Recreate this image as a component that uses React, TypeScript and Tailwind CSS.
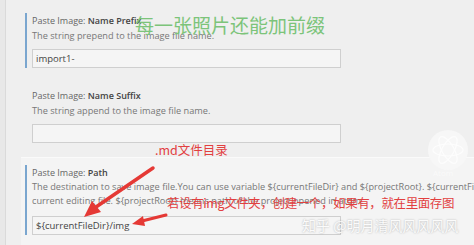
import React from "react";

const Field = ({
    name,
    desc,
    value,
    bar,
    gap = "mt-[6px]",
}: {
    name: string;
    desc: React.ReactNode;
    value?: string;
    bar?: boolean;
    gap?: string;
}) => {
    return (
        <div className="flex">
            <div className={bar ? "w-[2px] shrink-0 bg-[#7aa6cf]" : "w-[2px] shrink-0"} />
            <div className="flex-1 min-w-0 pl-[5px]">
                <div className="h-[15px] leading-[15px] text-[9px] text-[#666] whitespace-nowrap">
                    Paste Image: <span className="font-semibold text-[#444]">{name}</span>
                </div>
                <div className="text-[9.2px] leading-[15px] text-[#777] whitespace-nowrap">
                    {desc}
                </div>
                <div className={`${gap} w-[309px] h-[19px] border border-[#cfcfcf] bg-[#f5f5f5] px-[3px] text-[9.5px] leading-[17px] text-[#444]`}>
                    {value}
                </div>
            </div>
        </div>
    );
};

export default function App() {
    return (
        <div className="relative w-[474px] h-[245px] overflow-hidden flex bg-[#efefef] font-['Open_Sans','Noto_Sans','Noto_Sans_CJK_SC',sans-serif]">
            <div className="w-[6px] shrink-0 bg-[#e8e8e8] border-r border-[#dadada]" />

            <div className="flex-1 min-w-0 flex flex-col">
                <div className="pl-[19px] pt-[13px]">
                    <Field
                        bar
                        name="Name Prefix"
                        desc="The string prepend to the image file name."
                        value="import1-"
                    />
                </div>
                <div className="pl-[19px] pt-[20px]">
                    <Field name="Name Suffix" desc="The string append to the image file name." />
                </div>

                <div className="mt-[14px] ml-[15px] flex-1 bg-[#f4f4f4] border-t border-[#fafafa] pl-[4px] pt-[7px]">
                    <Field
                        bar
                        name="Path"
                        gap="mt-[8px]"
                        desc={
                            <div className="leading-[14px]">
                                <div>
                                    The destination to save image file.You can use variable
                                    ${"{currentFileDir}"} and ${"{projectRoot}"}. ${"{currentFileDir}"} means the directory of
                                </div>
                                <div>
                                    current editing file. ${"{projectRoot}"} means path of the project opened in atom.
                                </div>
                            </div>
                        }
                        value="${currentFileDir}/img"
                    />
                </div>
            </div>

            {/* annotations */}
            <div className="absolute left-[135px] top-[12px] text-[19px] leading-[26px] text-[#7cc47a] font-['Noto_Sans_CJK_SC',sans-serif] whitespace-nowrap">
                每一张照片还能加前缀
            </div>
            <div className="absolute left-[155px] top-[141px] text-[12.5px] leading-[18px] text-[#e2403f] font-['Noto_Sans_CJK_SC',sans-serif] whitespace-nowrap">
                .md文件目录
            </div>
            <div className="absolute left-[167px] top-[194px] text-[12.5px] leading-[18px] text-[#e2403f] font-['Noto_Sans_CJK_SC',sans-serif] whitespace-nowrap tracking-[-0.4px]">
                若设有img文件夹，创建一个，如果有，就在里面存图
            </div>
            <div className="absolute left-[302px] top-[215px] text-[14px] leading-[20px] text-[#fbfbfb] font-['Noto_Sans_CJK_SC',sans-serif] whitespace-nowrap [text-shadow:0_0_2px_rgba(0,0,0,0.3)]">
                知乎 @明月清风风风风风
            </div>

            <div className="absolute left-[412px] top-[128px] w-[62px] h-[52px]">
                <svg width="62" height="52" viewBox="0 0 62 52">
                    <circle cx="36" cy="22" r="20" fill="#f7f7f7" />
                    <ellipse cx="36" cy="22" rx="15" ry="6" fill="none" stroke="#fdfdfd" strokeWidth="1.2" />
                    <ellipse cx="36" cy="22" rx="15" ry="6" fill="none" stroke="#fdfdfd" strokeWidth="1.2" transform="rotate(60 36 22)" />
                    <ellipse cx="36" cy="22" rx="15" ry="6" fill="none" stroke="#fdfdfd" strokeWidth="1.2" transform="rotate(-60 36 22)" />
                </svg>
                <div className="absolute left-[21px] top-[39px] text-[8px] text-[#fafafa] font-['Open_Sans',sans-serif]">Atom</div>
            </div>

            <svg className="absolute left-0 top-0" width="474" height="245" viewBox="0 0 474 245">
                <path d="M153 168 L96 207" stroke="#e53935" strokeWidth="3.5" strokeLinecap="round" />
                <path d="M84 217 L92 201 L101 212 Z" fill="#e53935" />
                <path d="M166 215 L142 221" stroke="#e53935" strokeWidth="3" strokeLinecap="round" />
                <path d="M132 224 L143 216 L145 226 Z" fill="#e53935" />
            </svg>
        </div>
    );
}
